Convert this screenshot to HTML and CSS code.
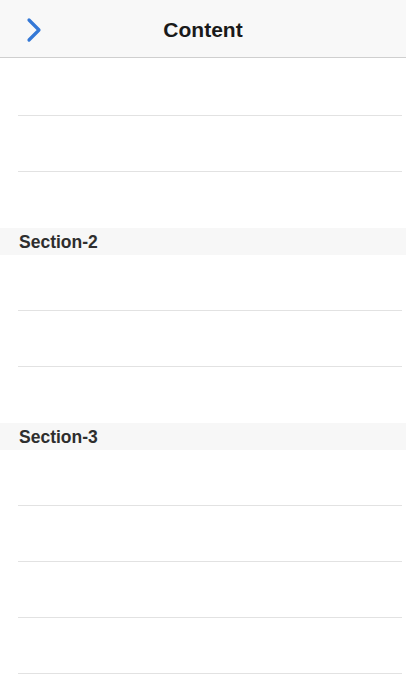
FILE: index.html
```html
<!DOCTYPE html>
<html>
<head>
<meta charset="utf-8">
<link rel="stylesheet" href="styles.css">
</head>
<body>
<div class="screen">
  <header class="navbar">
    <div class="nav-left">
      <svg class="chevron" width="16" height="26" viewBox="0 0 16 26">
        <path d="M3 3 L13 13 L3 23" fill="none" stroke="#3478d6" stroke-width="3.2" stroke-linecap="round" stroke-linejoin="round"/>
      </svg>
    </div>
    <div class="title">Content</div>
    <div class="nav-right"></div>
  </header>
  <div class="list">
    <section class="section first">
      <div class="row"></div>
      <div class="row"></div>
      <div class="row"></div>
    </section>
    <div class="section-header">Section-2</div>
    <section class="section">
      <div class="row"></div>
      <div class="row"></div>
      <div class="row"></div>
    </section>
    <div class="section-header">Section-3</div>
    <section class="section">
      <div class="row"></div>
      <div class="row"></div>
      <div class="row"></div>
      <div class="row"></div>
      <div class="row"></div>
    </section>
  </div>
</div>
</body>
</html>
```
FILE: styles.css
```css
html, body {
  margin: 0;
  padding: 0;
  background: #ffffff;
}
.screen {
  width: 406px;
  height: 696px;
  overflow: hidden;
  font-family: "Liberation Sans", Arial, sans-serif;
  color: #1c1c1c;
}
.navbar {
  height: 57px;
  background: #f8f8f8;
  border-bottom: 1px solid #cfcfcf;
  display: flex;
  align-items: center;
}
.nav-left, .nav-right {
  width: 60px;
  display: flex;
  align-items: center;
}
.nav-left {
  padding-left: 26px;
  box-sizing: border-box;
  padding-top: 2px;
}
.title {
  flex: 1;
  text-align: center;
  font-size: 21px;
  font-weight: bold;
  color: #1a1a1a;
  padding-top: 2px;
}
.section.first {
  padding-top: 2px;
}
.row {
  height: 56px;
  margin-left: 18px;
  margin-right: 4px;
  box-sizing: border-box;
  border-bottom: 1px solid #e2e2e2;
}
.row:last-child {
  border-bottom: none;
}
.section-header {
  height: 27px;
  background: #f7f7f7;
  padding-left: 19px;
  font-size: 17.5px;
  font-weight: bold;
  color: #2e2e2e;
  display: flex;
  align-items: center;
  padding-top: 1px;
  box-sizing: border-box;
}
```
